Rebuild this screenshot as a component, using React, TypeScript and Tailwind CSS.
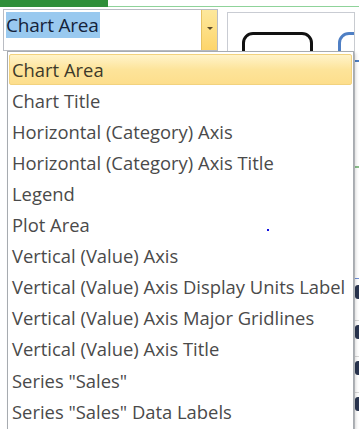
const items = [
  'Chart Area',
  'Chart Title',
  'Horizontal (Category) Axis',
  'Horizontal (Category) Axis Title',
  'Legend',
  'Plot Area',
  'Vertical (Value) Axis',
  'Vertical (Value) Axis Display Units Label',
  'Vertical (Value) Axis Major Gridlines',
  'Vertical (Value) Axis Title',
  'Series "Sales"',
  'Series "Sales" Data Labels',
];

export default function App() {
  return (
    <div className="w-[359px] h-[429px] relative overflow-hidden bg-white font-['Open_Sans',sans-serif]">
      {/* ribbon strip */}
      <div className="flex h-[7px]">
        <div className="w-[108px] bg-[#2f8f3a]" />
        <div className="flex-1 border-b border-[#8fd39a]" />
      </div>

      <div className="flex h-[422px]">
        <div className="w-[3px] bg-black" />
        <div className="w-[1px] bg-[#9a9a9a]" />

        <div className="flex-1 flex items-start pt-[2px] pl-[3px]">
          {/* combo box */}
          <div className="w-[215px] h-[42px] flex border border-[#b9bcc3] bg-white">
            <div className="flex-1 pl-[2px] pt-[2px]">
              <span className="inline-block bg-[#99c9ef] text-[#15233a] text-[19px] leading-[26px] pr-[1px] tracking-[-0.2px]">Chart Area</span>
            </div>
            <div className="w-[16px] h-full bg-gradient-to-b from-[#fde89c] to-[#fdd56b] border-l border-[#e6c263] flex justify-center pt-[17px]">
              <div className="w-0 h-0 border-l-[3px] border-r-[3px] border-t-[3px] border-l-transparent border-r-transparent border-t-[#5a4a2a]" />
            </div>
          </div>

          {/* shape styles panel */}
          <div className="ml-[9px] mt-[3px] flex-1 h-[80px] border-l border-t border-[#c9ccd3] flex gap-[25px] pt-[19px] pl-[14px]">
            <div className="w-[71px] h-[60px] rounded-[11px] border-[3px] border-[#111]" />
            <div className="w-[40px] h-[60px] rounded-[11px] border-[3px] border-[#4f7fc4]" />
          </div>
        </div>
      </div>

      {/* content peeking out at the right edge */}
      <div className="absolute left-[354px] top-[12px] w-[5px] h-[417px] border-l border-[#c8cbd0] bg-white flex flex-col">
        <div className="h-[48px]" />
        <div className="h-[2px] bg-[#4f7fc4]" />
        <div className="h-[104px]" />
        <div className="h-[2px] bg-[#8cc08c]" />
        <div className="h-[110px]" />
        <div className="h-[1px] bg-[#6f8fd8]" />
        <div className="h-[6px]" />
        <div className="h-[14px] bg-[#2a3550] rounded-l-[3px]" />
        <div className="h-[22px] border-b border-[#d8d8d8]" />
        <div className="h-[4px]" />
        <div className="h-[14px] bg-[#2a3550] rounded-l-[3px]" />
        <div className="h-[18px] border-b border-[#d8d8d8]" />
        <div className="h-[4px]" />
        <div className="h-[14px] bg-[#2a3550] rounded-l-[3px]" />
        <div className="h-[18px] border-b border-[#d8d8d8]" />
        <div className="h-[4px]" />
        <div className="h-[14px] bg-[#2a3550] rounded-l-[3px]" />
      </div>

      {/* dropdown list */}
      <div className="absolute left-[7px] top-[51px] w-[347px] h-[390px] bg-white border border-[#a7abb0] shadow-[2px_2px_3px_rgba(0,0,0,0.15)] px-[1px] pt-[2px]">
        {items.map((item, i) => (
          <div
            key={item}
            className={
              i === 0
                ? 'h-[31px] pl-[2px] flex items-center text-[18.4px] text-[#3d3a2a] whitespace-nowrap border border-[#f2d27e] rounded-[2px] bg-gradient-to-b from-[#fff3c9] via-[#fde49a] to-[#fdde8c]'
                : 'h-[31.1px] pl-[3px] flex items-center text-[18.4px] text-[#4a4a4a] whitespace-nowrap'
            }
          >
            {item}
          </div>
        ))}
      </div>

      {/* stray blue dot */}
      <div className="absolute left-[267px] top-[229px] w-[2px] h-[2px] bg-[#1010e0]" />
    </div>
  );
}
